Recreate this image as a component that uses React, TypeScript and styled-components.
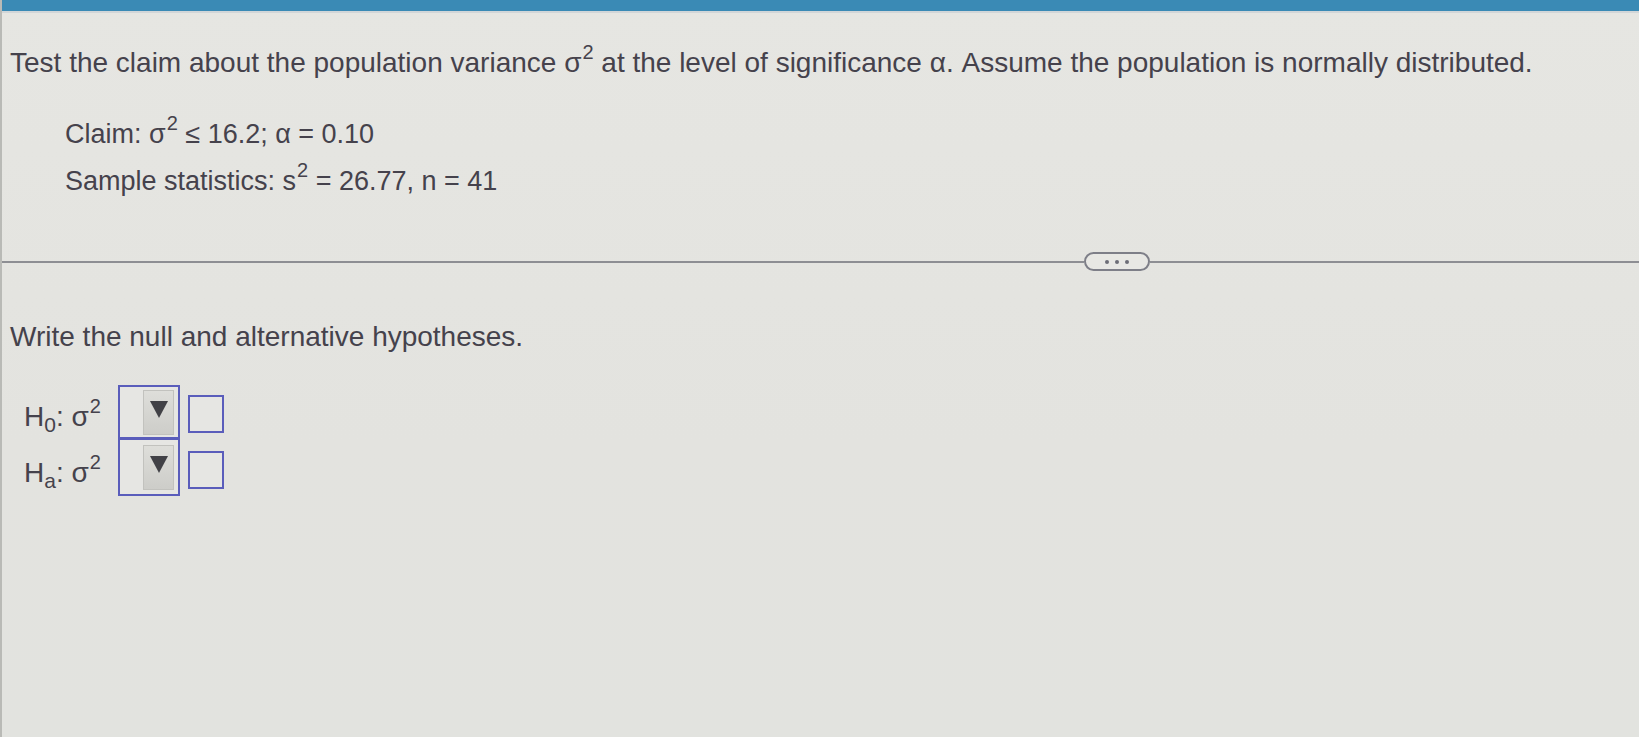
import React from "react";
import styled, { createGlobalStyle } from "styled-components";

const GlobalStyle = createGlobalStyle`
  html, body { margin: 0; padding: 0; }
  body {
    background: #e4e4e0;
    font-family: "Liberation Sans", Arial, sans-serif;
    color: #45424c;
    overflow: hidden;
  }
`;

const Page = styled.div`
  width: 1639px;
  height: 737px;
  display: flex;
  flex-direction: column;
  background: linear-gradient(180deg, #e6e6e2 0%, #e3e3df 60%, #e2e3df 100%);
  border-left: 2px solid #b9bab6;
  box-sizing: border-box;
`;

const TopBar = styled.div`
  height: 11px;
  flex: none;
  background: #3a8ab5;
  border-bottom: 2px solid #d2d6d8;
`;

const Question = styled.section`
  padding: 33px 0 0 8px;
`;

const Text = styled.p`
  margin: 0;
  font-size: 28px;
  line-height: 33px;
  white-space: nowrap;
`;

const Given = styled.div`
  padding: 39px 0 0 55px;
  display: flex;
  flex-direction: column;
  gap: 14px;
`;

const GivenText = styled(Text)`
  font-size: 27px;
`;

const Sup = styled.sup`
  font-size: 20px;
  vertical-align: 13px;
  line-height: 0;
  margin-left: 1px;
`;

const Sub = styled.sub`
  font-size: 21px;
  vertical-align: -6px;
  line-height: 0;
`;

const DividerRow = styled.div`
  margin-top: 54px;
  display: grid;
  grid-template-columns: 1082px auto 1fr;
  align-items: center;
`;

const Rule = styled.div`
  height: 2px;
  background: #8d8e93;
`;

const MoreButton = styled.button`
  width: 66px;
  height: 19px;
  border: 2px solid #7e7f88;
  border-radius: 10px;
  background: #e8e8e4;
  padding: 0;
  display: flex;
  align-items: center;
  justify-content: center;
  gap: 6px;
  box-sizing: border-box;
`;

const Dot = styled.span`
  width: 4px;
  height: 4px;
  border-radius: 50%;
  background: #6c6d76;
`;

const Answer = styled.section`
  padding: 49px 0 0 8px;
`;

const Hypotheses = styled.div`
  margin-top: 32px;
  padding-left: 14px;
  display: grid;
  grid-template-columns: 86px 62px auto;
  grid-template-rows: 55px 56px;
  column-gap: 8px;
  align-items: center;
`;

const Label = styled.div`
  font-size: 28px;
  line-height: 33px;
  align-self: end;
  padding-bottom: 7px;
  white-space: nowrap;
`;

const Select = styled.div<{ $top?: boolean }>`
  height: 100%;
  box-sizing: border-box;
  border: 2px solid #5a5dbb;
  border-top-width: ${(p) => (p.$top ? "2px" : "0")};
  border-bottom-width: ${(p) => (p.$top ? "3px" : "2px")};
  display: flex;
  justify-content: flex-end;
  align-items: center;
  padding-right: 4px;
  background: #e6e6e3;
`;

const Arrow = styled.div`
  width: 31px;
  height: 45px;
  background: linear-gradient(180deg, #dededa, #cdcdc9);
  border: 1px solid #c2c2be;
  box-sizing: border-box;
  display: flex;
  justify-content: center;
  padding-top: 9px;
`;

const Box = styled.div`
  width: 36px;
  height: 38px;
  box-sizing: border-box;
  border: 2px solid #5a5dbb;
  background: #e6e6e3;
  margin-top: 3px;
`;

const Sigma = () => (
  <>
    σ<Sup>2</Sup>
  </>
);

const Dropdown = ({ top }: { top?: boolean }) => (
  <Select $top={top}>
    <Arrow>
      <svg width="20" height="19" viewBox="0 0 20 19">
        <polygon points="1,1 19,1 10,18" fill="#414146" />
      </svg>
    </Arrow>
  </Select>
);

export default function App() {
  return (
    <>
      <GlobalStyle />
      <Page>
        <TopBar />
        <Question>
          <Text>
            Test the claim about the population variance <Sigma /> at the level of significance α. Assume the
            population is normally distributed.
          </Text>
          <Given>
            <GivenText>
              Claim: <Sigma /> ≤ 16.2; α = 0.10
            </GivenText>
            <GivenText>
              Sample statistics: s<Sup>2</Sup> = 26.77, n = 41
            </GivenText>
          </Given>
        </Question>
        <DividerRow>
          <Rule />
          <MoreButton aria-label="more">
            <Dot />
            <Dot />
            <Dot />
          </MoreButton>
          <Rule />
        </DividerRow>
        <Answer>
          <Text>Write the null and alternative hypotheses.</Text>
          <Hypotheses>
            <Label>
              H<Sub>0</Sub>: <Sigma />
            </Label>
            <Dropdown top />
            <Box />
            <Label>
              H<Sub>a</Sub>: <Sigma />
            </Label>
            <Dropdown />
            <Box />
          </Hypotheses>
        </Answer>
      </Page>
    </>
  );
}
